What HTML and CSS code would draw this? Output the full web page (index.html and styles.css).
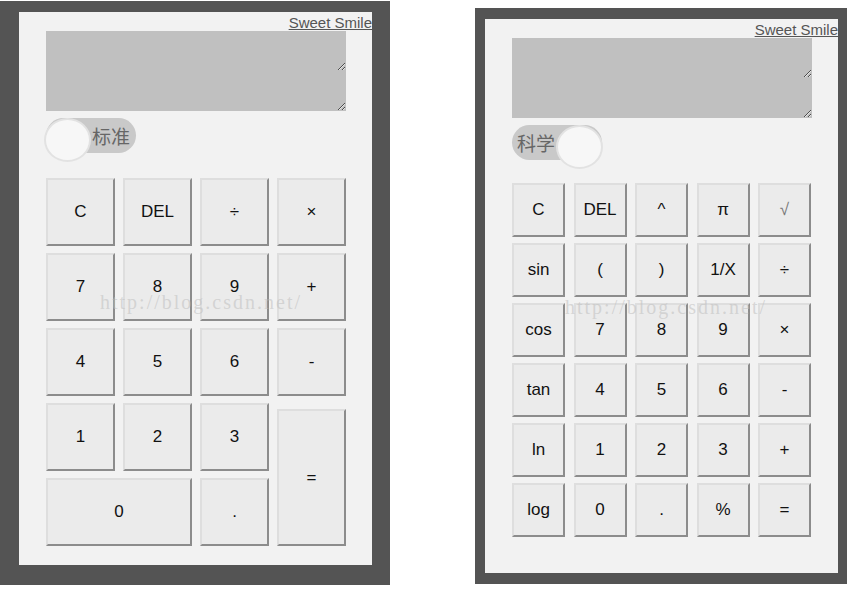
FILE: index.html
```html
<!DOCTYPE html>
<html>
<head>
<meta charset="utf-8">
<link rel="stylesheet" href="styles.css">
</head>
<body>
<div class="page">
  <div class="frame frame-left">
    <div class="panel">
      <div class="topline"><a class="author" href="#">Sweet Smile</a></div>
      <textarea class="screen"></textarea>
      <textarea class="screen"></textarea>
      <div class="toggle">
        <div class="track track-off"><span class="label label-off">标准</span></div>
        <div class="knob knob-off"></div>
      </div>
      <div class="keys keys-std">
        <button class="key">C</button>
        <button class="key">DEL</button>
        <button class="key">÷</button>
        <button class="key">×</button>
        <button class="key">7</button>
        <button class="key">8</button>
        <button class="key">9</button>
        <button class="key">+</button>
        <button class="key">4</button>
        <button class="key">5</button>
        <button class="key">6</button>
        <button class="key">-</button>
        <button class="key">1</button>
        <button class="key">2</button>
        <button class="key">3</button>
        <button class="key key-eq">=</button>
        <button class="key key-zero">0</button>
        <button class="key">.</button>
      </div>
      <div class="mark">http://blog.csdn.net/</div>
    </div>
  </div>
  <div class="frame frame-right">
    <div class="panel">
      <div class="topline"><a class="author" href="#">Sweet Smile</a></div>
      <textarea class="screen"></textarea>
      <textarea class="screen"></textarea>
      <div class="toggle">
        <div class="track track-on"><span class="label label-on">科学</span></div>
        <div class="knob knob-on"></div>
      </div>
      <div class="keys keys-sci">
        <button class="key">C</button>
        <button class="key">DEL</button>
        <button class="key">^</button>
        <button class="key">π</button>
        <button class="key key-root">√</button>
        <button class="key">sin</button>
        <button class="key">(</button>
        <button class="key">)</button>
        <button class="key">1/X</button>
        <button class="key">÷</button>
        <button class="key">cos</button>
        <button class="key">7</button>
        <button class="key">8</button>
        <button class="key">9</button>
        <button class="key">×</button>
        <button class="key">tan</button>
        <button class="key">4</button>
        <button class="key">5</button>
        <button class="key">6</button>
        <button class="key">-</button>
        <button class="key">ln</button>
        <button class="key">1</button>
        <button class="key">2</button>
        <button class="key">3</button>
        <button class="key">+</button>
        <button class="key">log</button>
        <button class="key">0</button>
        <button class="key">.</button>
        <button class="key">%</button>
        <button class="key">=</button>
      </div>
      <div class="mark mark-right">http://blog.csdn.net/</div>
    </div>
  </div>
</div>
</body>
</html>
```

FILE: styles.css
```css
html, body {
  margin: 0;
  padding: 0;
  background: #ffffff;
}
body {
  font-family: "Liberation Sans", Arial, sans-serif;
}
.page {
  display: flex;
  align-items: flex-start;
  padding-top: 1px;
  gap: 85px;
}
.frame {
  background: #545454;
  box-sizing: border-box;
}
.frame-left {
  width: 390px;
  height: 584px;
  padding: 11px 18px 20px 19px;
}
.frame-right {
  width: 372px;
  height: 576px;
  margin-top: 7px;
  padding: 11px 9px 11px 10px;
}
.panel {
  position: relative;
  width: 353px;
  height: 554px;
  background: #f2f2f2;
}
.frame-left .panel {
  height: 553px;
}
.topline {
  height: 19px;
  line-height: 21px;
  text-align: right;
}
.author {
  font-size: 15px;
  color: #555555;
  text-decoration: underline;
}
.screen {
  display: block;
  width: 300px;
  height: 40px;
  margin: 0 0 0 27px;
  padding: 0;
  border: none;
  outline: none;
  background: #c0c0c0;
  box-sizing: border-box;
}
.toggle {
  position: relative;
  width: 90px;
  height: 44px;
  margin: 3px 0 0 27px;
}
.track {
  box-sizing: border-box;
  margin-top: 7px;
  width: 90px;
  height: 35px;
  border-radius: 18px;
  background: #c9c9c9;
  display: flex;
  align-items: center;
}
.label {
  font-family: "Noto Sans CJK SC", sans-serif;
  font-size: 19px;
  color: #666666;
  line-height: 1;
}
.label-off {
  padding-left: 46px;
}
.label-on {
  padding-left: 5px;
}
.knob {
  position: absolute;
  top: 0;
  width: 47px;
  height: 44px;
  box-sizing: border-box;
  border-radius: 50%;
  background: #f7f7f7;
  border: 2px solid #e2e2e2;
}
.knob-off {
  left: -2px;
}
.knob-on {
  left: 44px;
}
.keys {
  display: grid;
  margin-left: 27px;
  width: 300px;
}
.keys-std {
  margin-top: 16px;
  grid-template-columns: repeat(4, 69px);
  grid-auto-rows: 68px;
  column-gap: 8px;
  row-gap: 7px;
}
.keys-sci {
  margin-top: 14px;
  grid-template-columns: repeat(5, 53px);
  grid-auto-rows: 54px;
  column-gap: 8.5px;
  row-gap: 6px;
}
.key {
  box-sizing: border-box;
  margin: 0;
  padding: 0;
  background: #ebebeb;
  border-style: solid;
  border-width: 2px;
  border-color: #dedede #8c8c8c #8c8c8c #dedede;
  font-family: "Liberation Sans", Arial, sans-serif;
  font-size: 17px;
  color: #111111;
}
.key-eq {
  grid-column: 4;
  grid-row: 4 / span 2;
  margin-top: 6px;
}
.key-zero {
  grid-column: 1 / span 2;
}
.key-root {
  color: #777777;
  font-weight: normal;
}
.mark {
  position: absolute;
  left: 81px;
  top: 279px;
  font-family: "Liberation Serif", "Times New Roman", serif;
  font-size: 20px;
  letter-spacing: 2px;
  color: rgba(190, 190, 190, 0.55);
  pointer-events: none;
  white-space: nowrap;
}
.mark-right {
  left: 80px;
  top: 277px;
}
```
